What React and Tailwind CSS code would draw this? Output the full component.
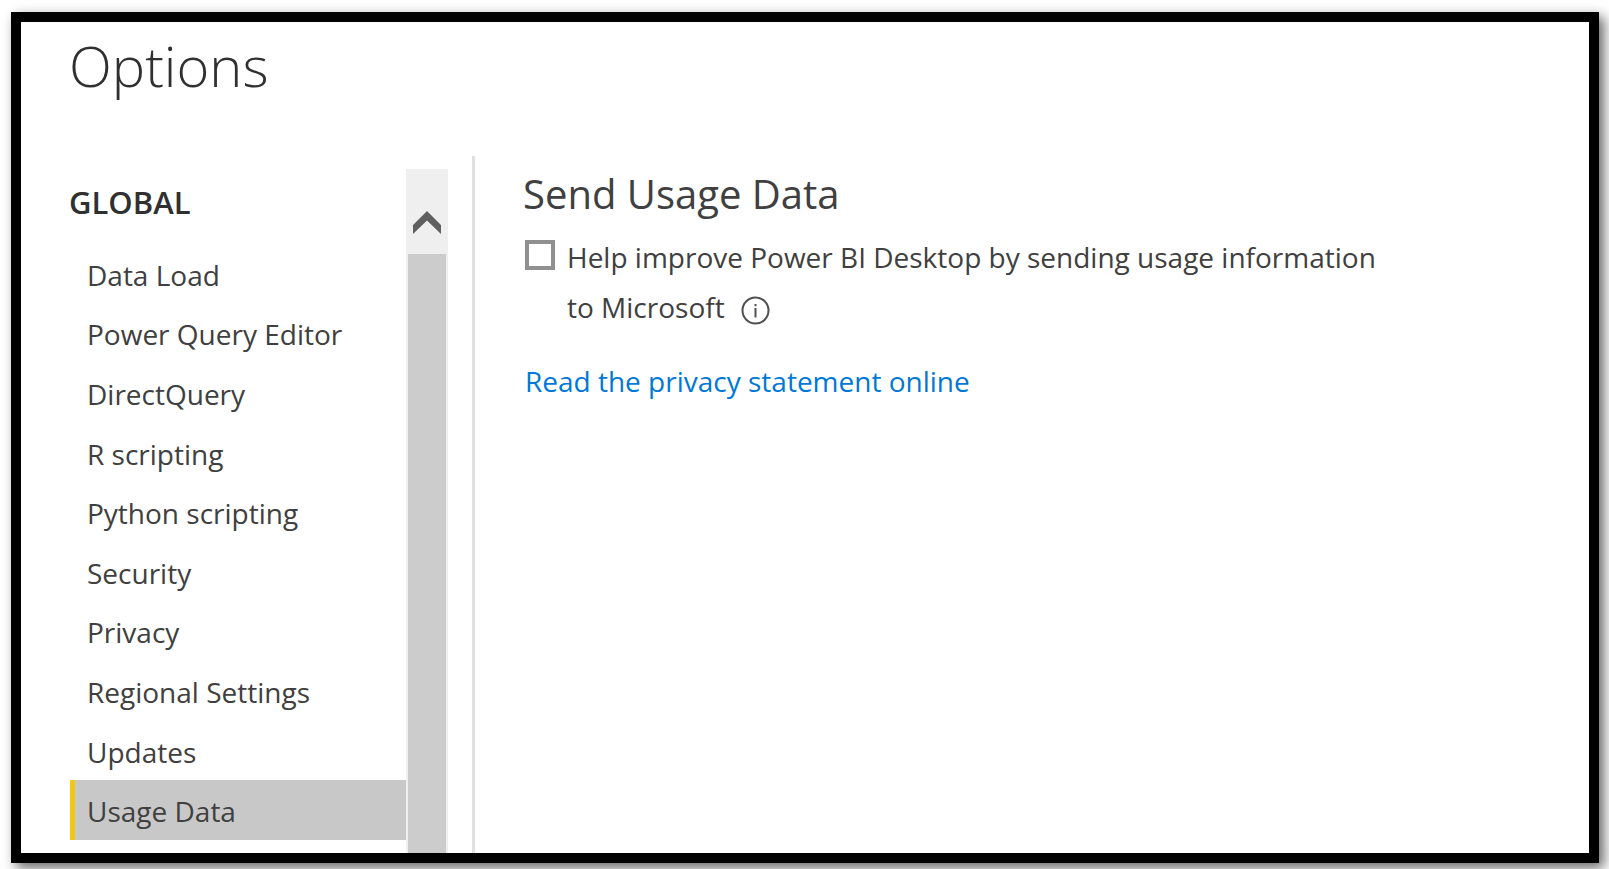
const sections = [
  "Data Load",
  "Power Query Editor",
  "DirectQuery",
  "R scripting",
  "Python scripting",
  "Security",
  "Privacy",
  "Regional Settings",
  "Updates",
  "Usage Data",
];

function NavItem({ label, active }) {
  return (
    <li className="flex flex-1">
      <button
        type="button"
        aria-current={active ? "page" : undefined}
        className={
          active
            ? "flex-1 border-l-[5px] border-[#f2c811] bg-[#c8c8c8] pt-[2px] pl-3 text-left"
            : "flex-1 border-l-[5px] border-transparent pt-[2px] pl-3 text-left"
        }
      >
        {label}
      </button>
    </li>
  );
}

function Scrollbar() {
  return (
    <div className="mt-[13px] flex w-[42px] flex-col bg-[#efefef]">
      <button type="button" aria-label="Scroll up" className="flex h-[85px] items-center justify-center pt-[22px]">
        <svg width="28" height="24" viewBox="0 0 28 24" fill="#606060">
          <path d="M14 0 L28 14 V23 L14 9.500 L0 23 V14 Z" />
        </svg>
      </button>
      <div className="mx-[2px] flex-1 bg-[#cccccc]" />
    </div>
  );
}

function InfoIcon() {
  return (
    <svg width="29" height="29" viewBox="0 0 29 29" fill="none" stroke="#505050" strokeWidth="2">
      <circle cx="14.500" cy="14.500" r="13" />
      <path d="M14.500 12 V21.500" />
      <path d="M14.500 8 V10.200" />
    </svg>
  );
}

export default function App() {
  return (
    <div className="h-screen bg-white pt-3 pr-[10px] pb-[6px] pl-[11px] font-['Open_Sans','Noto_Sans',sans-serif] text-[28px] text-[#404040]">
      <div className="flex h-full flex-col border-[10px] border-black bg-white pl-12 shadow-[5px_5px_12px_rgba(0,0,0,0.6)]">
        <h1 className="h-[134px] pt-[2px] text-[56px] leading-[82px] font-light text-[#303030]">Options</h1>
        <div className="flex min-h-0 flex-1">
          <nav aria-label="Global options" className="flex w-[337px] flex-col pb-[13px]">
            <h2 className="h-[88px] pt-[22px] text-[31px] leading-[48px] font-semibold text-[#303030]">GLOBAL</h2>
            <ul className="ml-px flex flex-1 flex-col">
              {sections.map((label) => (
                <NavItem key={label} label={label} active={label === "Usage Data"} />
              ))}
            </ul>
          </nav>
          <Scrollbar />
          <main className="ml-6 flex-1 border-l-[3px] border-[#e0e0e0] pt-[10px] pl-12">
            <h2 className="text-[40px] leading-[56px]">Send Usage Data</h2>
            <div className="mt-[10px] flex gap-3 pl-[2px]">
              <input
                id="usage"
                type="checkbox"
                className="mt-2 size-[30px] shrink-0 appearance-none border-4 border-[#909090] bg-white"
              />
              <label htmlFor="usage" className="max-w-[840px] leading-[50px]">
                Help improve Power BI Desktop by sending usage information to Microsoft
                <button type="button" aria-label="More information" className="ml-4 align-middle">
                  <InfoIcon />
                </button>
              </label>
            </div>
            <a href="#privacy" className="mt-6 block pl-[2px] leading-[50px] text-[#0078d7]">
              Read the privacy statement online
            </a>
          </main>
        </div>
      </div>
    </div>
  );
}
